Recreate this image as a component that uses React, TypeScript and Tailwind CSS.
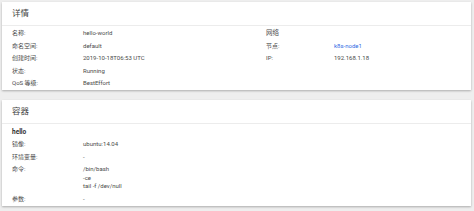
const font = { fontFamily: 'Roboto, "Noto Sans CJK SC", sans-serif' };

function Row({ label, children }: { label: string; children: React.ReactNode }) {
  return (
    <div className="flex h-[12.5px] items-center">
      <div className="w-[71px] shrink-0">{label}</div>
      <div>{children}</div>
    </div>
  );
}

function Card({ title, children }: { title: string; children: React.ReactNode }) {
  return (
    <div className="bg-white shadow-[0_1px_2px_rgba(0,0,0,0.28)]">
      <div className="flex h-[24px] items-center border-b border-[#ececec] px-[10px] text-[8.5px] text-[#444]">
        {title}
      </div>
      {children}
    </div>
  );
}

export default function App() {
  return (
    <div
      className="h-[211px] w-[474px] overflow-hidden bg-[#eeeeee] px-[2px] pt-[2px] text-[6px] leading-none text-[#4a4a4a]"
      style={font}
    >
      <div className="w-[469px]">
        <Card title="详情">
          <div className="grid grid-cols-[254px_1fr] px-[10px] pt-[1px]">
            <div>
              <Row label="名称:">hello-world</Row>
              <Row label="命名空间:">default</Row>
              <Row label="创建时间:">2019-10-18T06:53 UTC</Row>
              <Row label="状态:">Running</Row>
              <Row label="QoS 等级:">BestEffort</Row>
            </div>
            <div>
              <div className="flex h-[12.5px] items-center text-[6.5px]">网络</div>
              <div className="flex h-[12.5px] items-center">
                <div className="w-[68px] shrink-0">节点:</div>
                <div className="text-[#326ce5]">k8s-node1</div>
              </div>
              <div className="flex h-[12.5px] items-center">
                <div className="w-[68px] shrink-0">IP:</div>
                <div>192.168.1.18</div>
              </div>
            </div>
          </div>
        </Card>

        <div className="mt-[10px]">
          <Card title="容器">
            <div className="px-[10px] pt-[2px] pb-[1px]">
              <div className="flex h-[12.5px] items-center text-[6.5px] font-bold text-[#333]">hello</div>
              <Row label="镜像:">ubuntu:14.04</Row>
              <Row label="环境变量:">-</Row>
              <div className="flex py-[2px]">
                <div className="flex h-[8.5px] w-[71px] shrink-0 items-center">命令:</div>
                <div className="flex flex-col">
                  <div className="flex h-[8.5px] items-center">/bin/bash</div>
                  <div className="flex h-[8.5px] items-center">-ce</div>
                  <div className="flex h-[8.5px] items-center">tail -f /dev/null</div>
                </div>
              </div>
              <Row label="参数:">-</Row>
            </div>
          </Card>
        </div>
      </div>
    </div>
  );
}
